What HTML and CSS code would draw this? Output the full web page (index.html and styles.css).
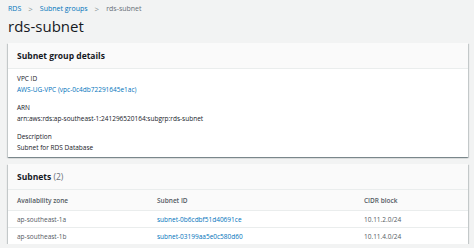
FILE: index.html
```html
<!DOCTYPE html>
<html lang="en">

<head>
    <meta charset="UTF-8">
    <meta name="viewport" content="width=device-width, initial-scale=1.0">
    <title>rds-subnet</title>
    <link rel="stylesheet" href="styles.css">
</head>

<body>
    <div class="breadcrumbs">
        <a href="#">RDS</a>
        <span class="sep">&gt;</span>
        <a href="#">Subnet groups</a>
        <span class="sep">&gt;</span>
        <span class="current">rds-subnet</span>
    </div>
    <h1 class="page-title">rds-subnet</h1>

    <div class="card">
        <div class="card-header">
            <h2>Subnet group details</h2>
        </div>
        <div class="card-body">
            <div class="field">
                <div class="label">VPC ID</div>
                <a class="value" href="#">AWS-UG-VPC (vpc-0c4db72291645e1ac)</a>
            </div>
            <div class="field">
                <div class="label">ARN</div>
                <div class="value">arn:aws:rds:ap-southeast-1:241296520164:subgrp:rds-subnet</div>
            </div>
            <div class="field">
                <div class="label">Description</div>
                <div class="value">Subnet for RDS Database</div>
            </div>
        </div>
    </div>

    <div class="card">
        <div class="card-header">
            <h2>Subnets <span class="count">(2)</span></h2>
        </div>
        <table class="subnets">
            <thead>
                <tr>
                    <th class="col-az">Availability zone</th>
                    <th class="col-id">Subnet ID</th>
                    <th>CIDR block</th>
                </tr>
            </thead>
            <tbody>
                <tr>
                    <td>ap-southeast-1a</td>
                    <td><a href="#">subnet-0b6cdbf51d40691ce</a></td>
                    <td>10.11.2.0/24</td>
                </tr>
                <tr>
                    <td>ap-southeast-1b</td>
                    <td><a href="#">subnet-03199aa5e0c580d60</a></td>
                    <td>10.11.4.0/24</td>
                </tr>
            </tbody>
        </table>
    </div>
</body>

</html>
```

FILE: styles.css
```css
body {
    font-family: "Open Sans", Arial, sans-serif;
    margin: 0;
    padding: 0 6px 0 8px;
    background-color: #f2f3f3;
    color: #16191f;
}

a {
    color: #0073bb;
    text-decoration: none;
}

/* Breadcrumbs */
.breadcrumbs {
    display: flex;
    align-items: center;
    height: 16px;
    font-size: 7px;
}

.breadcrumbs .sep {
    color: #879596;
    margin: 0 7px;
    font-size: 8px;
}

.breadcrumbs .current {
    color: #687078;
}

.page-title {
    font-size: 15px;
    font-weight: normal;
    margin: 0;
    line-height: 20px;
}

/* Cards */
.card {
    background-color: #fff;
    margin-top: 7px;
    box-shadow: 0 1px 1px 0 rgba(0, 28, 36, 0.3), 1px 1px 1px 0 rgba(0, 28, 36, 0.15), -1px 1px 1px 0 rgba(0, 28, 36, 0.15);
}

.card-header {
    background-color: #fafafa;
    border-bottom: 1px solid #eaeded;
    padding: 0 9px;
    height: 25px;
    display: flex;
    align-items: center;
}

.card-header h2 {
    margin: 0;
    font-size: 8.5px;
    font-weight: bold;
}

.card-header .count {
    color: #687078;
    font-weight: normal;
}

.card-body {
    padding: 4px 9px 4px;
    font-size: 6.5px;
}

.field {
    margin-bottom: 7px;
}

.field:last-child {
    margin-bottom: 0;
}

.label,
.value {
    display: block;
    line-height: 11px;
}

/* Table */
.subnets {
    width: 100%;
    border-collapse: collapse;
    font-size: 6.5px;
}

.subnets th {
    text-align: left;
    font-weight: 600;
    color: #545b64;
    background-color: #fafafa;
    height: 20px;
    padding: 0 9px;
    border-bottom: 1px solid #eaeded;
}

.subnets td {
    height: 16px;
    padding: 0 9px;
    color: #545b64;
    border-bottom: 1px solid #eaeded;
}

.subnets tr:last-child td {
    border-bottom: none;
}

.subnets .col-az {
    width: 122px;
}

.subnets .col-id {
    width: 189px;
}
```
